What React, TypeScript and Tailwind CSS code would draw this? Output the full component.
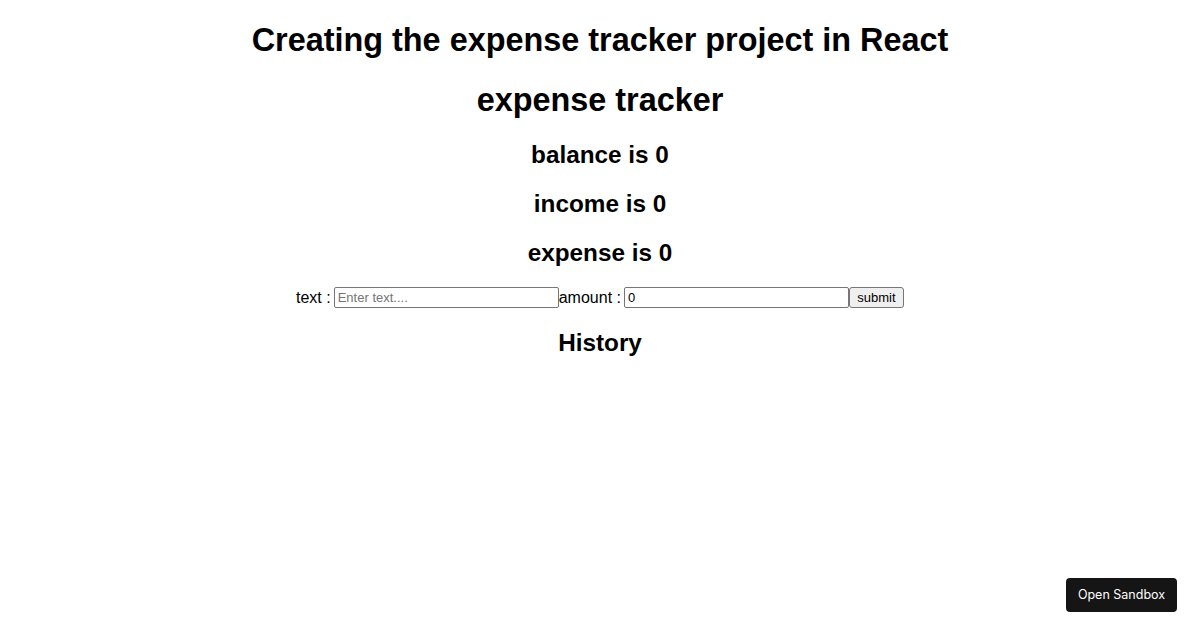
import React from 'react';

const App = () => {
  return (
    <div className="min-h-[630px] bg-white text-black font-['Liberation_Sans',Arial,sans-serif] text-center">
      <div className="pt-[21px]">
        <h1 className="text-[32.4px] font-bold leading-[38px]">Creating the expense tracker project in React</h1>
        <h1 className="mt-[22px] text-[32.4px] font-bold leading-[38px]">expense tracker</h1>

        <h2 className="mt-[21px] text-[24.3px] font-bold leading-[29px]">balance is 0</h2>
        <h2 className="mt-[20px] text-[24.3px] font-bold leading-[29px]">income is 0</h2>
        <h2 className="mt-[20px] text-[24.3px] font-bold leading-[29px]">expense is 0</h2>

        {/* Add transaction form */}
        <form className="mt-[20px] flex items-center justify-center text-[16px] leading-[21px]">
          <label className="mr-[3px]">text :</label>
          <input
            type="text"
            placeholder="Enter text...."
            className="h-[21px] w-[225px] rounded-[2px] border border-[#767676] px-[3px] text-[13px] placeholder:text-[#757575] outline-none"
          />
          <label className="mr-[3px]">amount :</label>
          <input
            type="number"
            defaultValue={0}
            className="h-[21px] w-[225px] rounded-[2px] border border-[#767676] px-[3px] text-[13px] outline-none"
          />
          <button
            type="button"
            className="h-[21px] w-[55px] rounded-[3px] border border-[#767676] bg-[#efefef] text-[13px] leading-none"
          >
            submit
          </button>
        </form>

        <h2 className="mt-[20px] text-[24.3px] font-bold leading-[29px]">History</h2>
      </div>

      <button
        type="button"
        className="fixed bottom-[18px] right-[23px] h-[34px] w-[111px] rounded-[4px] bg-[#151515] font-['Inter',sans-serif] text-[12.5px] text-white"
      >
        Open Sandbox
      </button>
    </div>
  );
};

export default App;
